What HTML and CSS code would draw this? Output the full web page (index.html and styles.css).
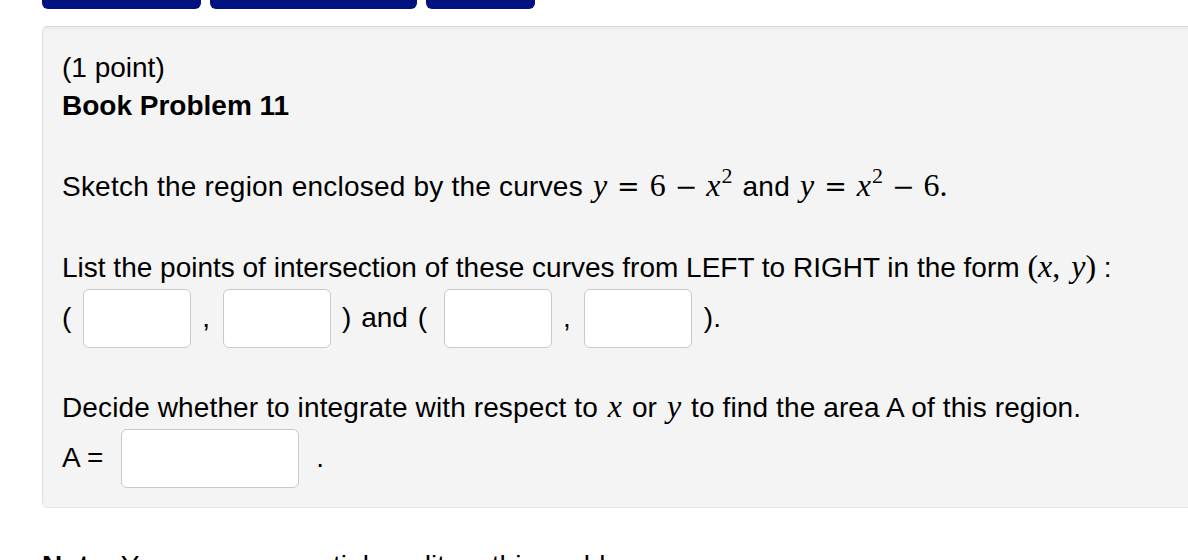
FILE: index.html
```html
<!DOCTYPE html>
<html>
<head>
<meta charset="utf-8">
<link rel="stylesheet" href="styles.css">
</head>
<body>
<div class="page">
  <div class="tabs">
    <div class="tab tab-1"></div>
    <div class="tab tab-2"></div>
    <div class="tab tab-3"></div>
  </div>
  <div class="problem">
    <div class="head">
      <div class="line">(1 point)</div>
      <div class="line bold">Book Problem 11</div>
    </div>
    <p class="para sketch">Sketch the region enclosed by the curves <span class="m v"><i>y</i><span class="rel">=</span>6<span class="bin">−</span><i>x</i><sup>2</sup></span> and <span class="m v"><i>y</i><span class="rel">=</span><i>x</i><sup>2</sup><span class="bin">−</span>6.</span></p>
    <p class="para">List the points of intersection of these curves from LEFT to RIGHT in the form <span class="m">(<i>x</i>,<span class="thin"></span><i>y</i>)</span> :</p>
    <div class="row">
      <span class="t">(</span>
      <span class="box b1"></span>
      <span class="t comma">,</span>
      <span class="box"></span>
      <span class="t and">) and (</span>
      <span class="box"></span>
      <span class="t comma">,</span>
      <span class="box"></span>
      <span class="t end">).</span>
    </div>
    <p class="para decide">Decide whether to integrate with respect to <span class="m v"><i>x</i></span> or <span class="m v"><i>y</i></span> to find the area A of this region.</p>
    <div class="row">
      <span class="t">A =</span>
      <span class="box wide"></span>
      <span class="t dot">.</span>
    </div>
  </div>
  <p class="note"><b>Note:</b> You can earn partial credit on this problem.</p>
</div>
</body>
</html>
```
FILE: styles.css
```css
html, body {
  margin: 0;
  padding: 0;
  background: #ffffff;
  overflow: hidden;
}
body {
  font-family: "Liberation Sans", Arial, Helvetica, sans-serif;
  font-size: 28px;
  color: #000;
}
.page {
  padding-left: 42px;
  width: 1170px;
}
.tabs {
  display: flex;
  gap: 9px;
  height: 9px;
}
.tab {
  background: #00127f;
  border-radius: 0 0 6px 6px;
  height: 9px;
}
.tab-1 { width: 159px; }
.tab-2 { width: 207px; }
.tab-3 { width: 109px; }
.problem {
  margin-top: 17px;
  background: #f4f4f4;
  border: 1px solid #e3e3e3;
  border-top-color: #d8d8d8;
  border-radius: 5px;
  box-shadow: inset 0 2px 3px rgba(0,0,0,0.04);
  padding: 22px 20px 18px 19px;
}
.line {
  line-height: 38px;
}
.bold {
  font-weight: bold;
}
.para {
  margin: 43px 0 0 0;
  line-height: 38px;
}
.sketch {
  letter-spacing: 0.22px;
}
.decide {
  letter-spacing: 0.12px;
}
.m {
  font-family: "Liberation Serif", "Times New Roman", serif;
  font-size: 32px;
  line-height: 0;
  letter-spacing: 0;
}
.m.v {
  padding: 0 2px;
}
.m i {
  font-style: italic;
}
.m sup {
  font-size: 22px;
  vertical-align: 0;
  position: relative;
  top: -13px;
  margin-left: 1px;
}
.rel, .bin {
  font-family: "DejaVu Serif", serif;
  font-size: 27px;
}
.rel {
  margin: 0 10px;
}
.bin {
  margin: 0 9px;
}
.thin {
  display: inline-block;
  width: 11px;
}
.row {
  display: flex;
  align-items: center;
  height: 62px;
}
.row + .para {
  margin-top: 40px;
}
.box {
  display: block;
  width: 106px;
  height: 57px;
  background: #fff;
  border: 1px solid #c9c9c9;
  border-radius: 6px;
}
.b1 {
  margin-left: 12px;
}
.comma {
  padding: 0 13px 0 11px;
}
.and {
  padding: 0 17px 0 11px;
  word-spacing: 2px;
}
.end {
  padding-left: 12px;
}
.wide {
  width: 176px;
  margin-left: 18px;
}
.dot {
  padding-left: 17px;
}
.note {
  margin: 39px 0 0 0;
  line-height: 38px;
}
```
